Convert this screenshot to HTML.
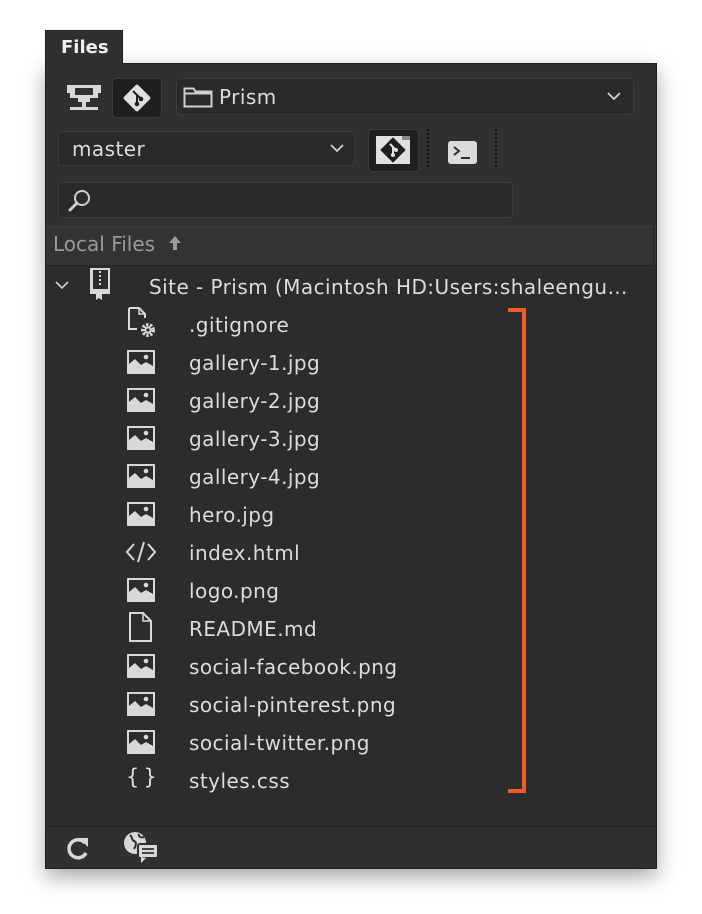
<!DOCTYPE html>
<html><head><meta charset="utf-8"><style>
*{margin:0;padding:0;box-sizing:border-box}
body{width:702px;height:914px;background:#fff;position:relative;overflow:hidden;font-family:"DejaVu Sans","Liberation Sans",sans-serif}
.a{position:absolute}
#panel{left:45px;top:63px;width:612px;height:806px;background:#303030;border:1px solid #1e1e1e;box-shadow:0 8px 20px rgba(0,0,0,.35)}
#tab{left:45px;top:30px;width:78px;height:35px;background:#303030;border:1px solid #1e1e1e;border-bottom:none;color:#f0f0f0;font-weight:bold;font-size:18px;padding:6px 0 0 15px}
.box{background:#272727;border:1px solid #3b3b3b;border-radius:4px}
.t{color:#dcdcdc;font-size:20px;white-space:nowrap;letter-spacing:0.45px}
</style></head><body>
<div class="a" id="panel"></div>
<div class="a" id="tab">Files</div>
<svg class="a" style="left:66px;top:82px" width="36" height="32" viewBox="0 0 36 32"><rect x="4" y="3" width="28" height="13" fill="#d8d8d8"/><rect x="9" y="6" width="18" height="7" fill="#303030"/><rect x="1" y="3" width="8" height="8" fill="#d8d8d8"/><rect x="27" y="3" width="8" height="8" fill="#d8d8d8"/><rect x="12" y="16" width="12" height="4" fill="#d8d8d8"/><rect x="16" y="20" width="4" height="5" fill="#d8d8d8"/><rect x="4" y="25" width="28" height="3" fill="#d8d8d8"/></svg>
<div class="a box" style="left:112px;top:78px;width:50px;height:40px;background:#1f1f1f"></div>
<svg class="a" style="left:120px;top:81px" width="34" height="34" viewBox="0 0 34 34"><rect x="7" y="7" width="20" height="20" transform="rotate(45 17 17)" fill="#e0e0e0" rx="2"/><path d="M13 10 L21 18 M17 14 L17 24" stroke="#1f1f1f" stroke-width="2"/><circle cx="17" cy="23" r="2.3" fill="#1f1f1f"/><circle cx="21" cy="18" r="2.3" fill="#1f1f1f"/></svg>
<div class="a box" style="left:176px;top:78px;width:458px;height:37px;background:#2a2a2a"></div>
<svg class="a" style="left:183px;top:86px" width="30" height="22" viewBox="0 0 30 22"><path d="M1.5 2.5h9l2 3h16v15h-27z" fill="none" stroke="#d0d0d0" stroke-width="2"/><path d="M1.5 7.5h27" stroke="#d0d0d0" stroke-width="2"/></svg>
<div class="a t" style="left:219px;top:85px">Prism</div>
<svg class="a" style="left:606px;top:91px" width="16" height="10"><path d="M2 2l6 6 6-6" fill="none" stroke="#d0d0d0" stroke-width="1.8"/></svg>
<div class="a box" style="left:58px;top:131px;width:297px;height:35px;background:#2a2a2a"></div>
<div class="a t" style="left:72px;top:137px">master</div>
<svg class="a" style="left:329px;top:143px" width="16" height="10"><path d="M2 2l6 6 6-6" fill="none" stroke="#d0d0d0" stroke-width="1.8"/></svg>
<div class="a box" style="left:368px;top:129px;width:51px;height:43px;background:#1f1f1f"></div>
<svg class="a" style="left:376px;top:136px" width="34" height="28" viewBox="0 0 34 28"><rect x="0" y="0" width="34" height="28" fill="#e0e0e0"/><rect x="26" y="0" width="8" height="4" fill="#888"/><rect x="8" y="5" width="18" height="18" transform="rotate(45 17 14)" fill="#1f1f1f"/><path d="M14 8 L20 14 M17 11 L17 19" stroke="#e0e0e0" stroke-width="2"/><circle cx="17" cy="19" r="2" fill="#e0e0e0"/><circle cx="20" cy="14" r="2" fill="#e0e0e0"/></svg>
<div class="a" style="left:427px;top:129px;height:38px;border-left:2px dotted #111"></div>
<div class="a" style="left:495px;top:129px;height:38px;border-left:2px dotted #111"></div>
<svg class="a" style="left:448px;top:141px" width="29" height="23" viewBox="0 0 29 23"><rect width="29" height="23" rx="3" fill="#dcdcdc"/><path d="M6 6l5 4-5 4" fill="none" stroke="#303030" stroke-width="2"/><path d="M13 17h9" stroke="#303030" stroke-width="2"/></svg>
<div class="a box" style="left:58px;top:182px;width:455px;height:36px;background:#2a2a2a"></div>
<svg class="a" style="left:67px;top:188px" width="26" height="26" viewBox="0 0 26 26"><circle cx="15" cy="10" r="7" fill="none" stroke="#cfcfcf" stroke-width="2"/><path d="M10 15L3 22" stroke="#cfcfcf" stroke-width="3" stroke-linecap="round"/></svg>
<div class="a" style="left:46px;top:226px;width:610px;height:40px;background:#333;border-top:1px solid #3a3a3a;border-bottom:1px solid #262626"></div>
<div class="a" style="left:653px;top:226px;height:40px;border-left:1px solid #222"></div>
<div class="a" style="left:53px;top:232px;color:#9a9a9a;font-size:20px">Local Files</div>
<svg class="a" style="left:168px;top:235px" width="14" height="16" viewBox="0 0 14 16"><path d="M7 1L1 8h4v7h4V8h4z" fill="#9a9a9a"/></svg>
<div class="a" style="left:46px;top:266px;width:610px;height:560px;background:#2c2c2c"></div>
<svg class="a" style="left:54px;top:279px" width="16" height="12"><path d="M2 3l6 6 6-6" fill="none" stroke="#cfcfcf" stroke-width="1.6"/></svg>
<svg class="a" style="left:88px;top:267px" width="24" height="34" viewBox="0 0 24 34"><rect x="2" y="1" width="20" height="26" fill="#d8d8d8"/><rect x="5" y="3" width="15" height="19" fill="#2c2c2c"/><path d="M12 4v16" stroke="#d8d8d8" stroke-width="2" stroke-dasharray="2 2"/><path d="M8 27v6l3-2 3 2v-6" fill="#d8d8d8"/></svg>
<div class="a t" style="left:149px;top:275px">Site - Prism (Macintosh HD:Users:shaleengu…</div>
<svg class="a" style="left:126px;top:307px" width="32" height="32" viewBox="0 0 32 32"><path d="M3 1h10l6 6v4M3 1v21h8" fill="none" stroke="#d8d8d8" stroke-width="2"/><path d="M13 1v6h6" fill="none" stroke="#d8d8d8" stroke-width="1.5"/><circle cx="22" cy="23" r="5" fill="none" stroke="#d8d8d8" stroke-width="4" stroke-dasharray="2.2 1.4"/><circle cx="22" cy="23" r="3.5" fill="#d8d8d8"/><circle cx="22" cy="23" r="1.6" fill="#2c2c2c"/></svg>
<div class="a t" style="left:189px;top:313px">.gitignore</div>
<svg width="0" height="0" style="position:absolute"><defs>
<symbol id="img" viewBox="0 0 28 24"><rect width="28" height="24" fill="#d8d8d8"/><rect x="2" y="2" width="24" height="18" fill="#2c2c2c"/><path d="M2 20 L2 14 L8 9 L14 15 L19 12 L26 16 L26 20Z" fill="#d8d8d8"/><circle cx="19" cy="7" r="2.3" fill="#d8d8d8"/></symbol>
</defs></svg>
<svg class="a" style="left:127px;top:350px" width="28" height="24"><use href="#img"/></svg>
<div class="a t" style="left:189px;top:351px">gallery-1.jpg</div>
<svg class="a" style="left:127px;top:388px" width="28" height="24"><use href="#img"/></svg>
<div class="a t" style="left:189px;top:389px">gallery-2.jpg</div>
<svg class="a" style="left:127px;top:426px" width="28" height="24"><use href="#img"/></svg>
<div class="a t" style="left:189px;top:427px">gallery-3.jpg</div>
<svg class="a" style="left:127px;top:464px" width="28" height="24"><use href="#img"/></svg>
<div class="a t" style="left:189px;top:465px">gallery-4.jpg</div>
<svg class="a" style="left:127px;top:502px" width="28" height="24"><use href="#img"/></svg>
<div class="a t" style="left:189px;top:503px">hero.jpg</div>
<svg class="a" style="left:124px;top:540px" width="34" height="24" viewBox="0 0 34 24"><path d="M10 4L3 12l7 8M24 4l7 8-7 8M20 2L14 22" fill="none" stroke="#d8d8d8" stroke-width="2"/></svg>
<div class="a t" style="left:189px;top:541px">index.html</div>
<svg class="a" style="left:127px;top:578px" width="28" height="24"><use href="#img"/></svg>
<div class="a t" style="left:189px;top:579px">logo.png</div>
<svg class="a" style="left:128px;top:612px" width="26" height="30" viewBox="0 0 26 30"><path d="M2 1h13l8 8v20H2z" fill="none" stroke="#d8d8d8" stroke-width="2"/><path d="M15 1v8h8" fill="none" stroke="#d8d8d8" stroke-width="1.5"/></svg>
<div class="a t" style="left:189px;top:617px">README.md</div>
<svg class="a" style="left:127px;top:654px" width="28" height="24"><use href="#img"/></svg>
<div class="a t" style="left:189px;top:655px">social-facebook.png</div>
<svg class="a" style="left:127px;top:692px" width="28" height="24"><use href="#img"/></svg>
<div class="a t" style="left:189px;top:693px">social-pinterest.png</div>
<svg class="a" style="left:127px;top:730px" width="28" height="24"><use href="#img"/></svg>
<div class="a t" style="left:189px;top:731px">social-twitter.png</div>
<div class="a t" style="left:126px;top:765px;font-size:21px;letter-spacing:4px">{}</div>
<div class="a t" style="left:189px;top:769px">styles.css</div>
<div class="a" style="left:508px;top:308px;width:18px;height:485px;border:4px solid #f15a24;border-left:none"></div>
<div class="a" style="left:46px;top:826px;width:610px;height:42px;background:#303030;border-top:1px solid #262626"></div>
<svg class="a" style="left:64px;top:834px" width="28" height="28" viewBox="0 0 28 28"><path d="M21 9A9 9 0 1 0 22 19" fill="none" stroke="#d8d8d8" stroke-width="3.5"/><path d="M15 4h9v9z" fill="#d8d8d8"/></svg>
<svg class="a" style="left:122px;top:830px" width="38" height="36" viewBox="0 0 38 36"><circle cx="13" cy="13" r="11" fill="#d8d8d8"/><path d="M8 5c3 2 1 5 4 6s2 5 0 8M17 4c-1 3 3 4 5 3" fill="none" stroke="#303030" stroke-width="2"/><rect x="16" y="14" width="20" height="14" rx="2" fill="#d8d8d8" stroke="#303030" stroke-width="2"/><path d="M19 27l0 6 5-5z" fill="#d8d8d8"/><path d="M20 19h12M20 23h12" stroke="#303030" stroke-width="1.8"/></svg>
</body></html>
